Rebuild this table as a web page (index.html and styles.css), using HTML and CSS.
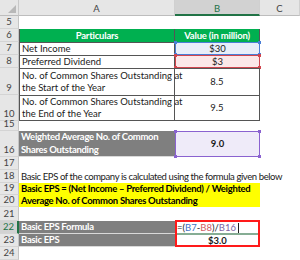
FILE: index.html
```html
<!DOCTYPE html>
<html>
<head>
<meta charset="utf-8">
<link rel="stylesheet" href="styles.css">
</head>
<body>
<div class="sheet">
  <!-- header row -->
  <div class="corner"><span class="tri"></span></div>
  <div class="colhead">A</div>
  <div class="colhead sel">B</div>
  <div class="colhead">C</div>

  <!-- row 5 -->
  <div class="rh">5</div><div class="c"></div><div class="c"></div><div class="c"></div>
  <!-- row 6 -->
  <div class="rh">6</div>
  <div class="c green ctr bl br">Particulars</div>
  <div class="c green ctr br">Value (in million)</div>
  <div class="c"></div>
  <!-- row 7 -->
  <div class="rh">7</div>
  <div class="c bl br bt">Net Income</div>
  <div class="c ctr refblue">$30<span class="h tl"></span><span class="h tr"></span><span class="h bl2"></span><span class="h br2"></span></div>
  <div class="c"></div>
  <!-- row 8 -->
  <div class="rh">8</div>
  <div class="c bl br bt">Preferred Dividend</div>
  <div class="c ctr refred">$3<span class="h tl"></span><span class="h tr"></span><span class="h bl2"></span><span class="h br2"></span></div>
  <div class="c"></div>
  <!-- row 9 -->
  <div class="rh">9</div>
  <div class="c two bl br bt">No. of Common Shares Outstanding at<br>the Start of the Year</div>
  <div class="c ctr br bt">8.5</div>
  <div class="c"></div>
  <!-- row 10 -->
  <div class="rh">10</div>
  <div class="c two bl br bt bb">No. of Common Shares Outstanding at<br>the End of the Year</div>
  <div class="c ctr br bt bb">9.5</div>
  <div class="c"></div>
  <!-- row 15 -->
  <div class="rh">15</div><div class="c"></div><div class="c"></div><div class="c"></div>
  <!-- row 16 -->
  <div class="rh">16</div>
  <div class="c grey two">Weighted Average No. of Common<br>Shares Outstanding</div>
  <div class="c ctr bold refpurple">9.0<span class="h tl"></span><span class="h tr"></span><span class="h bl2"></span><span class="h br2"></span></div>
  <div class="c"></div>
  <!-- row 17 -->
  <div class="rh">17</div><div class="c"></div><div class="c"></div><div class="c"></div>
  <!-- row 18 -->
  <div class="rh">18</div>
  <div class="c span3 tight">Basic EPS of the company is calculated using the formula given below</div>
  <!-- row 19 -->
  <div class="rh">19</div>
  <div class="c yellow span2">Basic EPS = (Net Income – Preferred Dividend) / Weighted</div>
  <div class="c"></div>
  <!-- row 20 -->
  <div class="rh">20</div>
  <div class="c yellow span2">Average No. of Common Shares Outstanding</div>
  <div class="c"></div>
  <!-- row 21 -->
  <div class="rh">21</div><div class="c"></div><div class="c"></div><div class="c"></div>
  <!-- row 22 -->
  <div class="rh act">22</div>
  <div class="c grey">Basic EPS Formula</div>
  <div class="redbox">
    <div class="c formula">=(<span class="fb">B7</span>-<span class="fr">B8</span>)/<span class="fp">B16</span><span class="cursor"></span></div>
    <div class="c ctr bold result">$3.0</div>
  </div>
  <div class="c"></div>
  <!-- row 23 -->
  <div class="rh">23</div>
  <div class="c grey">Basic EPS</div>
  <div class="c"></div>
  <!-- row 24 -->
  <div class="rh">24</div><div class="c"></div><div class="c"></div><div class="c"></div>
</div>
</body>
</html>
```

FILE: styles.css
```css
html, body {
  margin: 0;
  padding: 0;
  background: #ffffff;
  overflow: hidden;
}

.sheet {
  width: 300px;
  height: 260px;
  display: grid;
  grid-template-columns: 19px 156px 85px 40px;
  grid-template-rows: 16px 13px 13px 13px 13px 27px 26px 10px 26px 13px 13px 12px 12px 14px 13px 13px 13px;
  font-family: Lato, "Liberation Sans", sans-serif;
  font-size: 9.5px;
  color: #1a1a1a;
  overflow: hidden;
}

.corner {
  background: #e6e6e6;
  border-right: 1px solid #c8c8c8;
  border-bottom: 1px solid #bdbdbd;
  display: flex;
  align-items: flex-end;
  justify-content: flex-end;
  padding: 0 2px 2px 0;
  box-sizing: border-box;
}

.tri {
  width: 0;
  height: 0;
  border-left: 8px solid transparent;
  border-bottom: 8px solid #b8b8b8;
}

.colhead {
  background: #e6e6e6;
  border-bottom: 1px solid #bdbdbd;
  border-right: 1px solid #d0d0d0;
  display: flex;
  align-items: center;
  justify-content: center;
  color: #444;
  font-size: 9.5px;
  box-sizing: border-box;
  padding-top: 2px;
}

.colhead.sel {
  background: #d2d2d2;
  border-bottom: 2px solid #217346;
  color: #217346;
}

.rh {
  background: #e6e6e6;
  border-right: 1px solid #c4c4c4;
  border-bottom: 1px solid #d4d4d4;
  color: #444;
  display: flex;
  align-items: flex-end;
  justify-content: center;
  box-sizing: border-box;
  line-height: 12px;
}

.rh.act {
  background: #d2d2d2;
  color: #217346;
  border-right: 2px solid #217346;
}

.c {
  box-sizing: border-box;
  display: flex;
  align-items: flex-end;
  padding: 0 2px;
  line-height: 12px;
  white-space: nowrap;
  position: relative;
  min-width: 0;
}

.tight { letter-spacing: -0.4px; }

.two {
  align-items: center;
  line-height: 12.5px;
}

.ctr {
  justify-content: center;
  align-items: center;
}

.bold { font-weight: bold; }

.bl { border-left: 1px solid #555; }
.br { border-right: 1px solid #555; }
.bt { border-top: 1px solid #555; }
.bb { border-bottom: 1px solid #555; }

.green {
  background: #00b050;
  color: #ffffff;
  font-weight: bold;
  letter-spacing: -0.2px;
}

.grey {
  background: #7f7f7f;
  color: #ffffff;
  font-weight: bold;
  border-bottom: 1px solid #d9d9d9;
  letter-spacing: -0.3px;
}

.yellow {
  background: #ffff00;
  font-weight: bold;
  color: #000;
  letter-spacing: -0.3px;
}

.span2 { grid-column: span 2; }
.span3 { grid-column: span 3; }

.refblue {
  background: #e8eef9;
  border: 1px solid #4a7ed6;
}
.refred {
  background: #fbe7e8;
  border: 1px solid #d0454e;
}
.refpurple {
  background: #efebf9;
  border: 1px solid #8a62d0;
}

.h {
  position: absolute;
  width: 3px;
  height: 3px;
}
.refblue .h { background: #4a7ed6; }
.refred .h { background: #d0454e; }
.refpurple .h { background: #8a62d0; }
.tl { left: -2px; top: -2px; }
.tr { right: -2px; top: -2px; }
.bl2 { left: -2px; bottom: -2px; }
.br2 { right: -2px; bottom: -2px; }

.redbox {
  grid-row: span 2;
  border: 2px solid #ff1a1a;
  margin-top: -1px;
  box-sizing: border-box;
  display: flex;
  flex-direction: column;
}

.formula {
  height: 13px;
  border-bottom: 2px solid #86ad94;
  padding-left: 0;
  align-items: center;
}
.result {
  flex: 1;
}
.fb { color: #4472c4; }
.fr { color: #d05a63; }
.fp { color: #8064a2; }
.cursor {
  display: inline-block;
  width: 1px;
  height: 10px;
  background: #222;
  margin-left: 2px;
}
```
